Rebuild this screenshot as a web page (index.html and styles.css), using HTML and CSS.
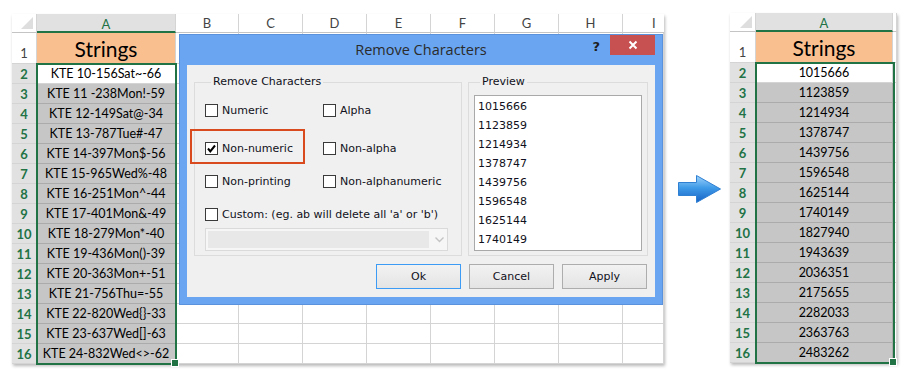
FILE: index.html
```html
<!DOCTYPE html>
<html>
<head>
<meta charset="utf-8">
<link rel="stylesheet" href="styles.css">
</head>
<body>
<div class="page">
  <div class="sheet sheet-left">
    <div class="c corner"><span class="tri"></span></div><div class="c ch sel">A</div><div class="c ch">B</div><div class="c ch">C</div><div class="c ch">D</div><div class="c ch">E</div><div class="c ch">F</div><div class="c ch">G</div><div class="c ch">H</div><div class="c ch clip">I</div>
    <div class="c rh r1">1</div><div class="c title">Strings</div><div class="c"></div><div class="c"></div><div class="c"></div><div class="c"></div><div class="c"></div><div class="c"></div><div class="c"></div><div class="c"></div>
    <div class="c rh sel">2</div><div class="c w">KTE 10-156Sat~-66</div><div class="c"></div><div class="c"></div><div class="c"></div><div class="c"></div><div class="c"></div><div class="c"></div><div class="c"></div><div class="c"></div>
    <div class="c rh sel">3</div><div class="c g">KTE 11 -238Mon!-59</div><div class="c"></div><div class="c"></div><div class="c"></div><div class="c"></div><div class="c"></div><div class="c"></div><div class="c"></div><div class="c"></div>
    <div class="c rh sel">4</div><div class="c g">KTE 12-149Sat@-34</div><div class="c"></div><div class="c"></div><div class="c"></div><div class="c"></div><div class="c"></div><div class="c"></div><div class="c"></div><div class="c"></div>
    <div class="c rh sel">5</div><div class="c g">KTE 13-787Tue#-47</div><div class="c"></div><div class="c"></div><div class="c"></div><div class="c"></div><div class="c"></div><div class="c"></div><div class="c"></div><div class="c"></div>
    <div class="c rh sel">6</div><div class="c g">KTE 14-397Mon$-56</div><div class="c"></div><div class="c"></div><div class="c"></div><div class="c"></div><div class="c"></div><div class="c"></div><div class="c"></div><div class="c"></div>
    <div class="c rh sel">7</div><div class="c g">KTE 15-965Wed%-48</div><div class="c"></div><div class="c"></div><div class="c"></div><div class="c"></div><div class="c"></div><div class="c"></div><div class="c"></div><div class="c"></div>
    <div class="c rh sel">8</div><div class="c g">KTE 16-251Mon^-44</div><div class="c"></div><div class="c"></div><div class="c"></div><div class="c"></div><div class="c"></div><div class="c"></div><div class="c"></div><div class="c"></div>
    <div class="c rh sel">9</div><div class="c g">KTE 17-401Mon&amp;-49</div><div class="c"></div><div class="c"></div><div class="c"></div><div class="c"></div><div class="c"></div><div class="c"></div><div class="c"></div><div class="c"></div>
    <div class="c rh sel">10</div><div class="c g">KTE 18-279Mon*-40</div><div class="c"></div><div class="c"></div><div class="c"></div><div class="c"></div><div class="c"></div><div class="c"></div><div class="c"></div><div class="c"></div>
    <div class="c rh sel">11</div><div class="c g">KTE 19-436Mon()-39</div><div class="c"></div><div class="c"></div><div class="c"></div><div class="c"></div><div class="c"></div><div class="c"></div><div class="c"></div><div class="c"></div>
    <div class="c rh sel">12</div><div class="c g">KTE 20-363Mon+-51</div><div class="c"></div><div class="c"></div><div class="c"></div><div class="c"></div><div class="c"></div><div class="c"></div><div class="c"></div><div class="c"></div>
    <div class="c rh sel">13</div><div class="c g">KTE 21-756Thu=-55</div><div class="c"></div><div class="c"></div><div class="c"></div><div class="c"></div><div class="c"></div><div class="c"></div><div class="c"></div><div class="c"></div>
    <div class="c rh sel">14</div><div class="c g">KTE 22-820Wed{}-33</div><div class="c"></div><div class="c"></div><div class="c"></div><div class="c"></div><div class="c"></div><div class="c"></div><div class="c"></div><div class="c"></div>
    <div class="c rh sel">15</div><div class="c g">KTE 23-637Wed[]-63</div><div class="c"></div><div class="c"></div><div class="c"></div><div class="c"></div><div class="c"></div><div class="c"></div><div class="c"></div><div class="c"></div>
    <div class="c rh sel">16</div><div class="c g">KTE 24-832Wed&lt;&gt;-62</div><div class="c"></div><div class="c"></div><div class="c"></div><div class="c"></div><div class="c"></div><div class="c"></div><div class="c"></div><div class="c"></div>
    <div class="selbox selbox-left"><span class="handle"></span></div>
  </div>

  <div class="dialog">
    <div class="titlebar">
      <div class="title">Remove Characters</div>
      <div class="controls">
        <span class="help">?</span>
        <span class="close"><svg width="10" height="10" viewBox="0 0 10 10"><path d="M1.5 1.5 L8.5 8.5 M8.5 1.5 L1.5 8.5" stroke="#fff" stroke-width="2" fill="none"/></svg></span>
      </div>
    </div>
    <div class="content">
      <div class="groups">
        <fieldset class="group group-opts">
          <legend>Remove Characters</legend>
          <div class="opt-row row1">
            <div class="opt col1"><span class="cb"></span>Numeric</div>
            <div class="opt"><span class="cb"></span>Alpha</div>
          </div>
          <div class="opt-row row2">
            <div class="opt col1"><span class="cb"><svg width="11" height="11" viewBox="0 0 11 11"><path d="M2 5.5 L4.3 8.3 L9 2.5" stroke="#000" stroke-width="2" fill="none"/></svg></span>Non-numeric</div>
            <div class="opt"><span class="cb"></span>Non-alpha</div>
          </div>
          <div class="opt-row row3">
            <div class="opt col1"><span class="cb"></span>Non-printing</div>
            <div class="opt"><span class="cb"></span>Non-alphanumeric</div>
          </div>
          <div class="opt-row row4">
            <div class="opt"><span class="cb"></span>Custom: (eg. ab will delete all 'a' or 'b')</div>
          </div>
          <div class="combo">
            <div class="combo-field"></div>
            <svg class="chev" width="9" height="6" viewBox="0 0 9 6"><path d="M0.5 0.5 L4.5 4.5 L8.5 0.5" stroke="#c4c4c4" stroke-width="1.4" fill="none"/></svg>
          </div>
        </fieldset>
        <fieldset class="group group-preview">
          <legend>Preview</legend>
          <div class="listbox">
            <div class="item">1015666</div>
            <div class="item">1123859</div>
            <div class="item">1214934</div>
            <div class="item">1378747</div>
            <div class="item">1439756</div>
            <div class="item">1596548</div>
            <div class="item">1625144</div>
            <div class="item">1740149</div>
          </div>
        </fieldset>
      </div>
      <div class="buttons">
        <button class="btn btn-ok">Ok</button>
        <button class="btn">Cancel</button>
        <button class="btn">Apply</button>
      </div>
      <div class="highlight"></div>
    </div>
  </div>

  <div class="arrow">
    <svg width="44" height="30" viewBox="0 0 44 30">
      <defs>
        <linearGradient id="ag" x1="0" y1="0" x2="0" y2="1">
          <stop offset="0" stop-color="#9fd3fb"/>
          <stop offset="0.45" stop-color="#3f9be8"/>
          <stop offset="1" stop-color="#1662c4"/>
        </linearGradient>
      </defs>
      <path d="M0.5 8.5 H18.5 V1.5 L42.5 15 L18.5 28.5 V21.5 H0.5 Z" fill="url(#ag)" stroke="#2f7fd3" stroke-width="1"/>
    </svg>
  </div>

  <div class="sheet sheet-right">
    <div class="c corner"><span class="tri"></span></div><div class="c ch sel">A</div><div class="c ch"></div>
    <div class="c rh r1">1</div><div class="c title">Strings</div><div class="c"></div>
    <div class="c rh sel">2</div><div class="c w">1015666</div><div class="c"></div>
    <div class="c rh sel">3</div><div class="c g">1123859</div><div class="c"></div>
    <div class="c rh sel">4</div><div class="c g">1214934</div><div class="c"></div>
    <div class="c rh sel">5</div><div class="c g">1378747</div><div class="c"></div>
    <div class="c rh sel">6</div><div class="c g">1439756</div><div class="c"></div>
    <div class="c rh sel">7</div><div class="c g">1596548</div><div class="c"></div>
    <div class="c rh sel">8</div><div class="c g">1625144</div><div class="c"></div>
    <div class="c rh sel">9</div><div class="c g">1740149</div><div class="c"></div>
    <div class="c rh sel">10</div><div class="c g">1827940</div><div class="c"></div>
    <div class="c rh sel">11</div><div class="c g">1943639</div><div class="c"></div>
    <div class="c rh sel">12</div><div class="c g">2036351</div><div class="c"></div>
    <div class="c rh sel">13</div><div class="c g">2175655</div><div class="c"></div>
    <div class="c rh sel">14</div><div class="c g">2282033</div><div class="c"></div>
    <div class="c rh sel">15</div><div class="c g">2363763</div><div class="c"></div>
    <div class="c rh sel">16</div><div class="c g">2483262</div><div class="c"></div>
    <div class="selbox selbox-right"><span class="handle"></span></div>
  </div>
</div>
</body>
</html>
```

FILE: styles.css
```css
html, body {
  margin: 0;
  background: #ffffff;
}

.page {
  position: relative;
  display: flex;
  align-items: flex-start;
  padding: 14px 0 0 12px;
  width: 906px;
  height: 377px;
  box-sizing: border-box;
}

/* ---------- spreadsheet ---------- */
.sheet {
  position: relative;
  display: grid;
  grid-template-rows: 19px 31px repeat(15, 20px);
  font-family: "Lato", "Liberation Sans", sans-serif;
  font-size: 12.5px;
  color: #000;
  background: #fff;
  box-shadow: 1px 2px 3px rgba(0, 0, 0, 0.28);
}

.sheet-left {
  grid-template-columns: 25px 139px 63px repeat(6, 64px) 41px;
}

.sheet-right {
  grid-template-columns: 26px 137px 4px;
  margin-top: -1px;
  margin-left: 8px;
}

.c {
  box-sizing: border-box;
  border-right: 1px solid #d4d4d4;
  border-bottom: 1px solid #d4d4d4;
  display: flex;
  align-items: center;
  justify-content: center;
  overflow: hidden;
  white-space: nowrap;
}

.corner {
  position: relative;
  border-bottom-color: #c4c4c4;
}

.tri {
  position: absolute;
  right: 3px;
  bottom: 3px;
  width: 0;
  height: 0;
  border-left: 12px solid transparent;
  border-bottom: 12px solid #dedede;
}

.ch {
  color: #444;
  font-size: 13px;
  border-bottom-color: #c4c4c4;
}

.ch.sel {
  background: #e1e1e1;
  color: #217346;
  border-bottom: 2px solid #217346;
  padding-top: 2px;
}

.ch.clip {
  justify-content: flex-start;
  padding-left: 29px;
  border-right: none;
}

.rh {
  color: #444;
  font-size: 13px;
}

.rh.r1 {
  align-items: flex-end;
  padding-bottom: 2px;
}

.rh.sel {
  background: #e1e1e1;
  color: #217346;
  font-weight: bold;
}

.title {
  background: #f9bf8f;
  font-size: 21px;
  align-items: flex-end;
  padding-bottom: 2px;
}

.w {
  background: #fff;
}

.g {
  background: #c6c6c6;
  border-bottom-color: #ababab;
  border-right-color: #ababab;
}

.selbox {
  position: absolute;
  box-sizing: border-box;
  border: 2px solid #217346;
  pointer-events: none;
}

.selbox-left {
  left: 24px;
  top: 49px;
  width: 141px;
  height: 302px;
}

.selbox-right {
  left: 25px;
  top: 49px;
  width: 140px;
  height: 302px;
}

.handle {
  position: absolute;
  right: -4px;
  bottom: -4px;
  width: 6px;
  height: 6px;
  background: #217346;
  border: 1px solid #fff;
}

/* ---------- dialog ---------- */
.dialog {
  position: absolute;
  left: 179px;
  top: 34px;
  width: 484px;
  height: 271px;
  box-sizing: border-box;
  background: #69a5f1;
  border: 1px solid #5a92dd;
  padding: 0 7px 7px;
  display: flex;
  flex-direction: column;
  font-family: "DejaVu Sans", "Liberation Sans", sans-serif;
  font-size: 11px;
  color: #101020;
}

.titlebar {
  position: relative;
  height: 30px;
  display: flex;
  align-items: center;
  justify-content: center;
}

.titlebar .title {
  background: none;
  font-family: "Open Sans", "Liberation Sans", sans-serif;
  font-size: 14.5px;
  color: #2b2b2b;
  padding: 0 0 2px 0;
}

.controls {
  position: absolute;
  right: 0;
  top: 0;
  display: flex;
  align-items: flex-start;
}

.help {
  font-family: "DejaVu Sans", sans-serif;
  font-weight: bold;
  font-size: 13px;
  color: #1e1e1e;
  margin-top: 4px;
  margin-right: 10px;
}

.close {
  width: 45px;
  height: 20px;
  background: #c75050;
  display: flex;
  align-items: center;
  justify-content: center;
}

.content {
  position: relative;
  flex: 1;
  background: #f0f0f0;
  padding: 10px 7px 0 7px;
  display: flex;
  flex-direction: column;
}

.groups {
  display: flex;
  gap: 6px;
}

.group {
  margin: 0;
  padding: 0;
  box-sizing: border-box;
  height: 181px;
  border: 1px solid #dcdcdc;
  min-width: 0;
}

.group legend {
  margin-left: 6px;
  padding: 0 2px;
  line-height: 14px;
  font-size: 11px;
}

.group-opts {
  width: 268px;
  padding-left: 10px;
}

.group-preview {
  width: 180px;
  padding-left: 5px;
}

.opt-row {
  display: flex;
  height: 14px;
  align-items: center;
}

.row1 { margin-top: 14px; }
.row2 { margin-top: 24px; }
.row3 { margin-top: 19px; }
.row4 { margin-top: 19px; }

.opt {
  display: flex;
  align-items: center;
  white-space: nowrap;
}

.col1 {
  width: 118px;
}

.cb {
  box-sizing: border-box;
  width: 13px;
  height: 13px;
  border: 1px solid #3a3a3a;
  background: #fff;
  margin-right: 4px;
  display: flex;
  align-items: center;
  justify-content: center;
}

.combo {
  margin-top: 7px;
  width: 243px;
  height: 23px;
  box-sizing: border-box;
  border: 1px solid #dadada;
  background: #f6f6f6;
  display: flex;
  align-items: center;
  padding: 2px;
}

.combo-field {
  width: 221px;
  height: 100%;
  background: #e8e8e8;
}

.chev {
  margin-left: 6px;
}

.listbox {
  margin-top: 6px;
  width: 168px;
  height: 156px;
  box-sizing: border-box;
  border: 1px solid #a9a9a9;
  background: #fff;
  padding: 1px 3px 0;
}

.item {
  line-height: 19px;
  height: 19px;
}

.buttons {
  display: flex;
  justify-content: flex-end;
  gap: 8px;
  margin-top: 8px;
  padding-right: 1px;
}

.btn {
  width: 85px;
  height: 25px;
  box-sizing: border-box;
  border: 1px solid #adadad;
  background: linear-gradient(#f2f2f2, #e4e4e4);
  font-family: "DejaVu Sans", "Liberation Sans", sans-serif;
  font-size: 11px;
  color: #101020;
  padding: 0;
}

.btn-ok {
  border-color: #3c9bf4;
}

.highlight {
  position: absolute;
  left: 3px;
  top: 64px;
  width: 115px;
  height: 35px;
  box-sizing: border-box;
  border: 2px solid #d94a1e;
}

/* ---------- arrow ---------- */
.arrow {
  margin-left: 14px;
  margin-top: 160px;
  width: 44px;
  height: 30px;
}

.arrow svg {
  display: block;
}
```
